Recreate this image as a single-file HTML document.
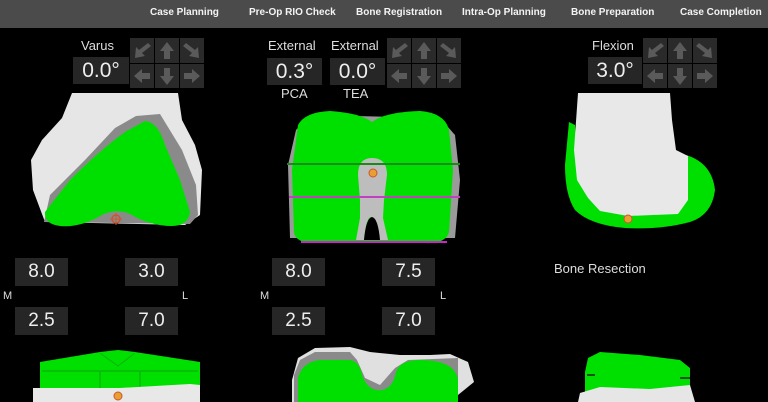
<!DOCTYPE html>
<html><head><meta charset="utf-8"><style>
*{margin:0;padding:0;box-sizing:border-box}
body{width:768px;height:402px;background:#000;overflow:hidden;position:relative;font-family:"Liberation Sans",Arial,sans-serif;color:#e8e8e8}
#nav{position:absolute;left:0;top:0;width:768px;height:28px;background:#4b4b4b}
#nav span{position:absolute;top:7px;font-size:10px;color:#f4f4f4;font-family:"Liberation Sans Narrow","Liberation Sans",sans-serif;font-weight:bold}
.lbl{position:absolute;font-size:13px;color:#ddd}
.box{position:absolute;background:#262626;color:#eee;text-align:center}
.deg{font-size:21px;height:27px;line-height:27px}
.num{font-size:19px;height:28px;line-height:28px;width:53px}
.sm{position:absolute;font-size:11px;color:#ddd}
svg{position:absolute;left:0;top:0}
</style></head><body>
<div id="nav">
<span style="left:150px">Case Planning</span>
<span style="left:249px">Pre-Op RIO Check</span>
<span style="left:356px">Bone Registration</span>
<span style="left:462px">Intra-Op Planning</span>
<span style="left:571px">Bone Preparation</span>
<span style="left:680px">Case Completion</span>
</div>
<svg width="768" height="402" viewBox="0 0 768 402">
<defs>
<g id="ar">
<rect x="0" y="0" width="24" height="25" fill="#2a2a2a"/>
<rect x="25" y="0" width="24" height="25" fill="#2a2a2a"/>
<rect x="50" y="0" width="24" height="25" fill="#2a2a2a"/>
<rect x="0" y="26" width="24" height="24" fill="#2a2a2a"/>
<rect x="25" y="26" width="24" height="24" fill="#2a2a2a"/>
<rect x="50" y="26" width="24" height="24" fill="#2a2a2a"/>
<g fill="#5a5a5a">
<path d="M5 20 L6 9 L9 12 L18 5 L21 8 L12 15 L15 18 Z"/>
<path d="M37 4 L44 13 L40 13 L40 21 L34 21 L34 13 L30 13 Z"/>
<path d="M69 20 L68 9 L65 12 L56 5 L53 8 L62 15 L59 18 Z"/>
<path d="M4 38 L12 31 L12 35 L20 35 L20 41 L12 41 L12 45 Z"/>
<path d="M37 47 L44 38 L40 38 L40 30 L34 30 L34 38 L30 38 Z"/>
<path d="M70 38 L62 31 L62 35 L54 35 L54 41 L62 41 L62 45 Z"/>
</g></g>
</defs>
<use href="#ar" x="130" y="38"/>
<use href="#ar" x="387" y="38"/>
<use href="#ar" x="643" y="38"/>

<!-- left femur -->
<path d="M72 93 L178 93 L182 120 L195 145 L202 170 L200 215 L185 225 L45 222 L33 190 L31 160 L42 140 L62 118 Z" fill="#e6e6e6"/>
<path d="M136 116 L160 114 L182 150 L196 185 L198 215 L190 224 L44 222 L50 195 L85 160 L115 128 Z" fill="#8a8a8a"/>
<path d="M145 121 Q158 122 165 145 L180 180 L190 212 Q188 226 172 226 Q150 226 130 214 Q116 208 102 215 Q80 228 60 226 Q44 224 45 212 L70 180 Q100 150 125 132 Z" fill="#00e000"/>
<circle cx="116" cy="219" r="4" fill="none" stroke="#c53" stroke-width="1.5"/>
<path d="M110 219 H122 M116 213 V225" stroke="#c53" stroke-width="1"/>

<!-- center femur -->
<path d="M288 165 L296 130 L310 115 L440 118 L455 135 L460 180 L455 238 L290 238 Z" fill="#9a9a9a"/>
<path d="M298 125 Q305 112 330 111 Q360 113 372 122 Q385 112 420 111 Q445 113 449 130 L453 170 L449 232 Q446 244 425 243 L315 243 Q295 243 294 232 L292 170 Z" fill="#00e000"/>
<path d="M358 175 Q358 158 372 158 Q387 158 387 175 L384 200 L383 218 L388 240 L378 240 Q376 218 371 217 Q366 218 364 240 L356 240 L360 218 L360 200 Z" fill="#bdbdbd"/>
<path d="M364 240 Q366 218 372 217 Q378 218 380 240 Z" fill="#000"/>
<line x1="287" y1="164" x2="460" y2="164" stroke="#1a8a1a" stroke-width="2"/>
<line x1="289" y1="197" x2="460" y2="197" stroke="#c040c0" stroke-width="2"/>
<line x1="301" y1="242" x2="447" y2="242" stroke="#d020d0" stroke-width="2"/>
<circle cx="373" cy="173" r="4" fill="#e8a030" stroke="#c53" stroke-width="1"/>

<!-- right femur -->
<path d="M569 122 L575 125 L578 180 L588 198 L600 210 L628 215 L675 213 L686 200 L686 155 Q712 163 715 190 Q712 215 690 222 Q660 230 625 228 Q590 225 575 210 Q565 195 565 165 Z" fill="#00e000"/>
<path d="M578 93 L670 93 L672 120 L676 150 L688 156 L688 200 L678 214 L628 216 L600 211 L588 198 L577 180 L574 150 Z" fill="#e8e8e8"/>
<circle cx="628" cy="219" r="4" fill="#e8a030" stroke="#c53" stroke-width="1"/>

<!-- bottom left -->
<path d="M40 372 L40 362 L100 352 L118 350 L135 352 L200 362 L200 390 L40 390 Z" fill="#00e000"/>
<path d="M100 353 L118 366 L135 353" fill="none" stroke="#10b010" stroke-width="1"/>
<line x1="42" y1="371" x2="198" y2="371" stroke="#10a010" stroke-width="1"/>
<line x1="100" y1="372" x2="100" y2="390" stroke="#10a010" stroke-width="1"/>
<line x1="140" y1="372" x2="140" y2="390" stroke="#10a010" stroke-width="1"/>
<path d="M33 388 L120 388 L190 384 L200 385 L200 402 L33 402 Z" fill="#e8e8e8"/>
<circle cx="118" cy="396" r="4" fill="#e8a030" stroke="#c53" stroke-width="1"/>

<!-- bottom center -->
<path d="M292 380 L298 358 L315 348 L350 347 L370 352 L400 355 L430 355 L450 354 L468 362 L474 382 L458 395 L458 402 L292 402 Z" fill="#e0e0e0"/>
<path d="M294 375 L300 360 L315 352 L350 352 L357 360 L365 378 L380 385 L395 368 L408 360 L458 358 L458 402 L294 402 Z" fill="#8a8a8a"/>
<path d="M298 378 Q302 362 320 360 L350 360 Q360 362 362 375 Q368 392 382 390 Q393 388 396 372 Q400 360 420 360 Q455 360 458 380 L458 402 L298 402 Z" fill="#00e000"/>

<!-- bottom right -->
<path d="M585 372 L588 358 L600 352 L640 355 L680 360 L690 368 L690 390 L585 392 Z" fill="#00e000"/>
<path d="M580 393 L600 387 L650 389 L690 385 L695 402 L578 402 Z" fill="#e6e6e6"/>
<line x1="587" y1="375" x2="595" y2="375" stroke="#222" stroke-width="1.5"/>
<line x1="680" y1="378" x2="690" y2="378" stroke="#222" stroke-width="1.5"/>
</svg>

<div class="lbl" style="left:81px;top:38px">Varus</div>
<div class="box deg" style="left:73px;top:57px;width:56px">0.0°</div>
<div class="lbl" style="left:268px;top:38px">External</div>
<div class="lbl" style="left:331px;top:38px">External</div>
<div class="box deg" style="left:267px;top:58px;width:55px">0.3°</div>
<div class="box deg" style="left:330px;top:58px;width:55px">0.0°</div>
<div class="lbl" style="left:281px;top:86px">PCA</div>
<div class="lbl" style="left:343px;top:86px">TEA</div>
<div class="lbl" style="left:592px;top:38px">Flexion</div>
<div class="box deg" style="left:588px;top:57px;width:54px">3.0°</div>

<div class="box num" style="left:15px;top:258px">8.0</div>
<div class="box num" style="left:125px;top:258px">3.0</div>
<div class="box num" style="left:15px;top:307px">2.5</div>
<div class="box num" style="left:125px;top:307px">7.0</div>
<div class="sm" style="left:3px;top:290px">M</div>
<div class="sm" style="left:182px;top:290px">L</div>
<div class="box num" style="left:272px;top:258px">8.0</div>
<div class="box num" style="left:382px;top:258px">7.5</div>
<div class="box num" style="left:272px;top:307px">2.5</div>
<div class="box num" style="left:382px;top:307px">7.0</div>
<div class="sm" style="left:260px;top:290px">M</div>
<div class="sm" style="left:440px;top:290px">L</div>
<div class="lbl" style="left:554px;top:261px">Bone Resection</div>
</body></html>
